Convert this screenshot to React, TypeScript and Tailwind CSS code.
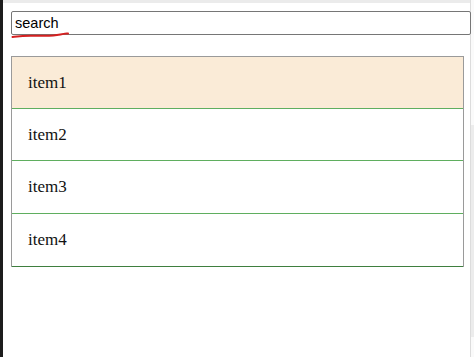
import React from "react";

const items = [
  { t: "item1", h: "h-[52px]", bg: "bg-[#faebd7]", b: "border-[#5fae5f]" },
  { t: "item2", h: "h-[52px]", bg: "bg-white", b: "border-[#5fae5f]" },
  { t: "item3", h: "h-[53px]", bg: "bg-white", b: "border-[#5fae5f]" },
  { t: "item4", h: "h-[53px]", bg: "bg-white", b: "border-[#3f7f3f]" },
];

export default function App() {
  return (
    <div className="flex h-[357px] w-[474px] overflow-hidden bg-white">
      <div className="w-[3px] shrink-0 bg-[#1c1c1c]" />
      <div className="flex min-w-0 flex-1 flex-col">
        <div className="h-[3px] bg-[#ebebeb]" />
        <div className="pl-[8px] pt-[8px]">
          <div className="relative">
            <input
              defaultValue="search"
              className="box-border block h-[24px] w-[460px] rounded-[2px] border border-[#767676] bg-white px-[3px] text-[14.5px] text-black outline-none"
              style={{ fontFamily: '"Liberation Sans", Arial, sans-serif' }}
            />
            <svg
              className="pointer-events-none absolute left-[0px] top-[20px]"
              width="60"
              height="8"
              viewBox="0 0 60 8"
            >
              <path
                d="M1.5 6 C 6 5.5, 12 4.6, 22 4.8 S 38 5, 46 4 S 53 2.2, 57 2.6"
                stroke="#d42020"
                strokeWidth="2"
                fill="none"
                strokeLinecap="round"
              />
            </svg>
          </div>
        </div>
        <div className="pl-[8px] pt-[21px]">
          <div className="w-[453px] border-x border-t border-[#9a9a9a]">
            {items.map((it) => (
              <div
                key={it.t}
                className={`box-border flex items-center border-b pl-[16px] text-[17px] text-[#111] ${it.h} ${it.bg} ${it.b}`}
                style={{ fontFamily: '"Liberation Serif", "Times New Roman", serif' }}
              >
                {it.t}
              </div>
            ))}
          </div>
        </div>
      </div>
      <div className="flex w-[4px] shrink-0 flex-col border-l border-[#dcdcdc] bg-[#fafafa]">
        <div className="h-[125px]" />
        <div className="h-[212px] bg-[#ececec]" />
      </div>
    </div>
  );
}
